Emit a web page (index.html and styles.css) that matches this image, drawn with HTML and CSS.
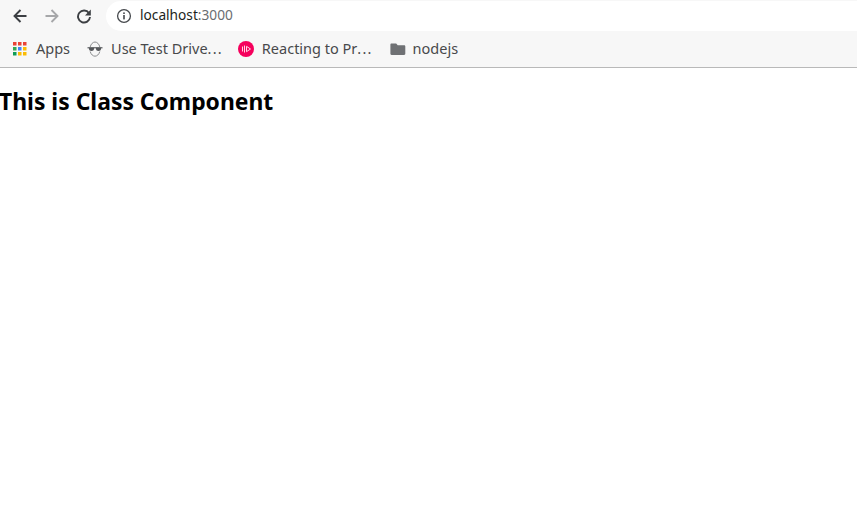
FILE: index.html
```
<!DOCTYPE html>
<html lang="en">
<head>
<meta charset="utf-8">
<title>localhost:3000</title>
<link rel="stylesheet" href="styles.css">
</head>
<body>
<header class="chrome">
  <div class="toolbar">
    <div class="nav">
      <svg class="nav-icon" viewBox="0 0 16 16"><path d="M14.500 8H2.500M8.500 2 2.500 8l6 6" fill="none" stroke="#3c3f43" stroke-width="1.900"/></svg>
      <svg class="nav-icon" viewBox="0 0 16 16"><path d="M1.500 8h12M7.500 2l6 6-6 6" fill="none" stroke="#a6a7a9" stroke-width="1.900"/></svg>
      <svg class="nav-icon" viewBox="0 0 16 16"><path d="M13 5.200A6 6 0 1 0 14 9" fill="none" stroke="#3c3f43" stroke-width="1.900"/><path d="M14.800 1.600v5.800H9z" fill="#3c3f43"/></svg>
    </div>
    <div class="omnibox">
      <svg class="info" viewBox="0 0 16 16"><circle cx="8" cy="8" r="6.400" fill="none" stroke="#45484c" stroke-width="1.300"/><rect x="7.200" y="7" width="1.600" height="4.400" fill="#45484c"/><rect x="7.200" y="4.400" width="1.600" height="1.600" fill="#45484c"/></svg>
      <span class="url">localhost<span class="port">:3000</span></span>
    </div>
  </div>
  <nav class="bookmarks">
    <div class="bookmark bookmark-apps">
      <svg class="favicon" viewBox="0 0 14 14">
        <rect x="0" y="0" width="3.500" height="3.500" fill="#ea4335"/><rect x="5" y="0" width="3.500" height="3.500" fill="#ea4335"/><rect x="10" y="0" width="3.500" height="3.500" fill="#ea4335"/>
        <rect x="0" y="5" width="3.500" height="3.500" fill="#34a853"/><rect x="5" y="5" width="3.500" height="3.500" fill="#4285f4"/><rect x="10" y="5" width="3.500" height="3.500" fill="#fbbc04"/>
        <rect x="0" y="10" width="3.500" height="3.500" fill="#0f9d58"/><rect x="5" y="10" width="3.500" height="3.500" fill="#fbbc04"/><rect x="10" y="10" width="3.500" height="3.500" fill="#fbbc04"/>
      </svg>
      <span class="label">Apps</span>
    </div>
    <div class="bookmark bookmark-test">
      <svg class="favicon favicon-wide" viewBox="0 0 16 16">
        <path d="M3.200 6C3.800 3 6 1 8 1s4.200 2 4.800 5M3.200 10.500C4 13.500 6 15.200 8 15.200s4-1.700 4.800-4.700" fill="none" stroke="#8a8c8e" stroke-width="1"/>
        <path d="M0.500 6.800h15" stroke="#4a4c50" stroke-width="1.100"/>
        <path d="M2 6.800h5v1c0 1.500-1 2.200-2.500 2.200S2 9.300 2 7.800zM9 6.800h5v1c0 1.500-1 2.200-2.500 2.200S9 9.300 9 7.800z" fill="#55575a"/>
      </svg>
      <span class="label">Use Test Drive<span class="ellipsis">...</span></span>
    </div>
    <div class="bookmark bookmark-react">
      <svg class="favicon favicon-wide" viewBox="0 0 16 16">
        <circle cx="8" cy="8" r="8" fill="#f5005c"/>
        <path d="M4.500 5.500v5M6.500 4.500v7" stroke="#ffd7e4" stroke-width="1"/>
        <path d="M8.500 5.300v5.400L12.500 8z" fill="none" stroke="#ffd7e4" stroke-width="1"/>
      </svg>
      <span class="label">Reacting to Pr<span class="ellipsis">...</span></span>
    </div>
    <div class="bookmark bookmark-folder">
      <svg class="favicon favicon-wide favicon-folder" viewBox="0 0 16 14"><path d="M1.500 1.500h4.700l1.500 1.700h6.500c.6 0 1.100.5 1.100 1.100v7.500c0 .6-.5 1.100-1.100 1.100H1.500c-.6 0-1.100-.5-1.100-1.100V2.600c0-.6.500-1.100 1.100-1.100z" fill="#6f7174"/></svg>
      <span class="label">nodejs</span>
    </div>
  </nav>
</header>
<main>
  <h2 class="title">This is Class Component</h2>
</main>
</body>
</html>
```
FILE: styles.css
```
* { box-sizing: border-box; }
html, body { margin: 0; padding: 0; background: #fff; }
body { font-family: "Noto Sans", "Open Sans", sans-serif; overflow: hidden; }
.chrome { background: #f7f7f7; border-bottom: 1px solid #b9b9b9; height: 68px; }
.toolbar { display: flex; height: 31px; align-items: flex-end; }
.nav { display: flex; width: 106px; height: 31px; padding-left: 12px; gap: 16px; align-items: center; }
.nav-icon { width: 16px; height: 16px; flex: none; }
.omnibox { flex: 1; height: 30px; background: #fff; border-radius: 15px 0 0 15px; display: flex; align-items: center; padding-left: 10px; }
.info { width: 16px; height: 16px; flex: none; margin-right: 8px; }
.url { font-size: 13.700px; line-height: 18px; color: #1d1f21; padding-bottom: 2px; }
.port { color: #6a6d70; }
.bookmarks { display: flex; height: 36px; align-items: center; padding-left: 13px; padding-bottom: 1px; font-size: 14.500px; line-height: 20px; color: #48494b; }
.bookmark { display: flex; align-items: center; flex: none; }
.label { padding-bottom: 2px; }
.ellipsis { letter-spacing: 1.200px; }
.favicon { width: 14px; height: 14px; flex: none; margin-right: 9px; }
.favicon-wide { width: 16px; height: 16px; margin-right: 8px; }
.favicon-folder { margin-right: 7px; }
.bookmark-test { margin-left: 17px; }
.bookmark-react { margin-left: 15px; }
.bookmark-folder { margin-left: 17px; }
main { padding-top: 21px; }
.title { margin: 0 0 0 -1px; font-size: 22.900px; line-height: 26px; font-weight: 700; color: #000; }
```
